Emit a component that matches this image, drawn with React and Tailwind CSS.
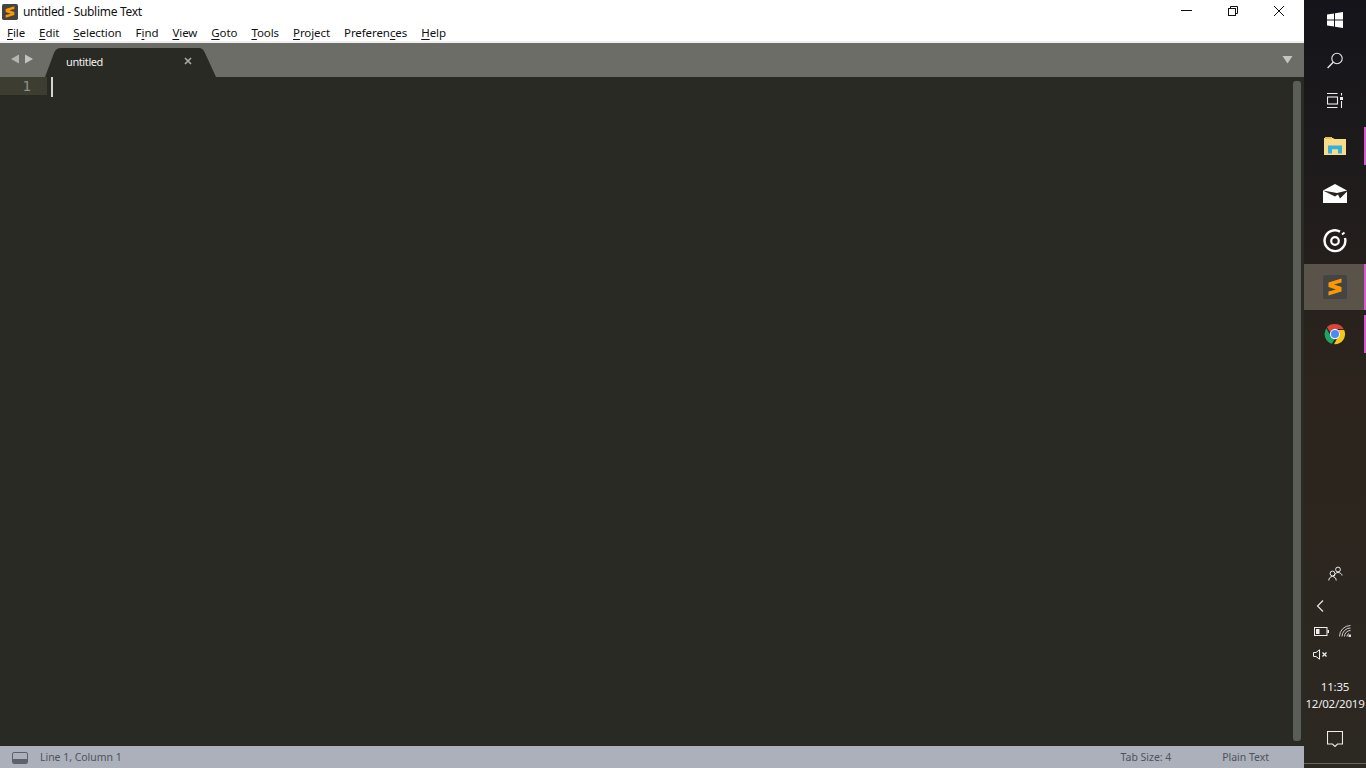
import React from 'react'

const uiFont = "font-['Noto_Sans','Open_Sans',sans-serif]"

const menus = [
  { label: 'File', idx: 0 },
  { label: 'Edit', idx: 0 },
  { label: 'Selection', idx: 0 },
  { label: 'Find', idx: 1 },
  { label: 'View', idx: 0 },
  { label: 'Goto', idx: 0 },
  { label: 'Tools', idx: 0 },
  { label: 'Project', idx: 0 },
  { label: 'Preferences', idx: 8 },
  { label: 'Help', idx: 0 },
]

export default function App() {
  return (
    <div className={`flex h-screen w-[1366px] overflow-hidden ${uiFont}`}>
      <div className="flex w-[1304px] flex-col">
        <TitleBar />
        <MenuBar />
        <TabBar />
        <Editor />
        <StatusBar />
      </div>
      <Taskbar />
    </div>
  )
}

function SublimeLogo({ size = 16 }) {
  return (
    <svg width={size} height={size} viewBox="0 0 24 24">
      <rect x="0" y="0" width="24" height="24" rx="2.5" fill="#444444" />
      <path d="M18.5 3.5L5.5 7.5V12L13 14.5L5.5 16.5V20.5L18.5 16.5V12L11 9.5L18.5 7.5Z" fill="#ff9800" />
    </svg>
  )
}

function TitleBar() {
  return (
    <div className="flex h-[23px] shrink-0 items-center bg-white">
      <div className="ml-[2px]"><SublimeLogo /></div>
      <span className="ml-[5px] text-[12px] leading-none tracking-[-0.3px] text-[#111]">untitled - Sublime Text</span>
      <div className="ml-auto flex pb-[2px]">
        <div className="flex w-[46px] justify-center">
          <svg width="12" height="12" viewBox="0 0 12 12"><path d="M0 5.5h11" stroke="#111" /></svg>
        </div>
        <div className="flex w-[46px] justify-center">
          <svg width="12" height="12" viewBox="0 0 12 12" fill="none" stroke="#111">
            <rect x="1.5" y="3.5" width="7" height="7" />
            <path d="M3.5 3.5v-2h7v7h-2" />
          </svg>
        </div>
        <div className="flex w-[46px] justify-center">
          <svg width="12" height="12" viewBox="0 0 12 12" stroke="#111" strokeWidth="1"><path d="M1 1l10 10M11 1L1 11" /></svg>
        </div>
        <div className="w-[2px]" />
      </div>
    </div>
  )
}

function MenuBar() {
  return (
    <div className="flex h-[20px] shrink-0 items-start gap-[14px] border-b-2 border-[#f0f0f0] bg-white pl-[7px] pt-[1px]">
      {menus.map((m) => (
        <span key={m.label} className="text-[11.5px] leading-[18px] tracking-[-0.08px] text-[#111]">
          {m.label.slice(0, m.idx)}
          <span className="underline underline-offset-2">{m.label[m.idx]}</span>
          {m.label.slice(m.idx + 1)}
        </span>
      ))}
    </div>
  )
}

function TabBar() {
  return (
    <div className="flex h-[34px] shrink-0 items-end bg-[#6c6d67]">
      <div className="flex h-[34px] w-[45px] items-center justify-center gap-[4px] pb-[3px] pr-[2px]">
        <svg width="10" height="10" viewBox="0 0 10 10"><path d="M9 0.5v9L1 5z" fill="#b4b5b1" /></svg>
        <svg width="10" height="10" viewBox="0 0 10 10"><path d="M1 0.5v9L9 5z" fill="#c4c5c1" /></svg>
      </div>
      <div className="relative flex h-[29px] w-[172px] items-center pb-[3px]">
        <svg className="absolute inset-0" width="172" height="29" viewBox="0 0 172 29">
          <path d="M0 29L9 5Q11 0 16 0H154Q158 0 160 5L171 29Z" fill="#292a24" />
        </svg>
        <span className="relative ml-[21px] text-[11px] leading-none tracking-[-0.4px] text-[#f1f1ec]">untitled</span>
        <svg className="relative ml-[81px]" width="8" height="8" viewBox="0 0 8 8">
          <path d="M1 1l6 6M7 1L1 7" stroke="#a9a9a5" strokeWidth="1.7" />
        </svg>
      </div>
      <div className="ml-auto flex h-[34px] items-center pb-[2px] pr-[11px]">
        <svg width="11" height="9" viewBox="0 0 11 9"><path d="M0.5 1h10L5.5 8.5z" fill="#c4c5c1" /></svg>
      </div>
    </div>
  )
}

function Editor() {
  return (
    <div className="flex min-h-0 flex-1 bg-[#292a24]">
      <div className="flex h-[18px] w-[47px] items-center justify-end bg-[#3e3d32] pr-[16px] font-['DejaVu_Sans_Mono',monospace] text-[14px] text-[#8f908a]">
        1
      </div>
      <div className="ml-[4px] h-[20px] w-[2px] bg-[#d4d4cc]" />
      <div className="ml-auto pb-[5px] pr-[3px] pt-[4px]">
        <div className="h-full w-[8px] rounded-[3px] bg-[#5b5d57]" />
      </div>
    </div>
  )
}

function StatusBar() {
  return (
    <div className="flex h-[22px] shrink-0 items-center bg-[#abb0bb] pt-[1px] text-[10.5px] tracking-[-0.03px] text-[#4f535c]">
      <div className="ml-[12px] flex h-[12px] w-[16px] flex-col overflow-hidden rounded-[2px] border border-[#5d6168]">
        <div className="flex-1" />
        <div className="h-[4px] bg-[#5d6168]" />
      </div>
      <span className="ml-[12px]">Line 1, Column 1</span>
      <span className="ml-auto">Tab Size: 4</span>
      <span className="ml-[51px] mr-[35px]">Plain Text</span>
    </div>
  )
}

function TaskItem({ h, active, pin, pinClass, children }) {
  return (
    <div className={`relative flex shrink-0 items-center justify-center ${h} ${active ? 'bg-[#5a5349]' : ''}`}>
      {children}
      {pin && <div className={`absolute right-0 w-[2px] bg-[#d75cd2] ${pinClass}`} />}
    </div>
  )
}

function Taskbar() {
  return (
    <div className="flex w-[62px] flex-col bg-gradient-to-b from-[#14141a] via-[#2c241d] to-[#2c2822] text-white">
      <TaskItem h="h-[40px]">
        <svg width="16" height="16" viewBox="0 0 16 16" fill="#fff">
          <path d="M0 2.5L7 1.4V7.4H0ZM8 1.2L16 0V7.4H8ZM0 8.4H7V14.6L0 13.5ZM8 8.4H16V16L8 14.8Z" />
        </svg>
      </TaskItem>
      <TaskItem h="h-[40px]">
        <svg width="16" height="17" viewBox="0 0 16 17" fill="none" stroke="#e8e8e8" strokeWidth="1.1">
          <circle cx="10" cy="6.5" r="5.2" />
          <path d="M6.2 10.2L0.6 16" strokeWidth="1.4" />
        </svg>
      </TaskItem>
      <TaskItem h="h-[43px] pb-[3px]">
        <svg width="16" height="15" viewBox="0 0 16 15" fill="none" stroke="#eee" strokeWidth="1.1">
          <path d="M0 .5h10.5M0 14.5h10.5" />
          <rect x=".5" y="4" width="10" height="7" />
          <path d="M14.5 0v2.5M14.5 8v7" />
          <rect x="13" y="4" width="3" height="3" fill="#eee" stroke="none" />
        </svg>
      </TaskItem>
      <TaskItem h="h-[47px] pb-[2px]" pin pinClass="top-[4px] h-[38px]">
        <svg width="22" height="18" viewBox="0 0 22 18">
          <path d="M0 1h9l1.5 1H22v16H0Z" fill="#f9dc87" />
          <path d="M1 0h7v2H1Z" fill="#e8bf5a" />
          <path d="M4 16.5v-8h14v8h-4v-4H8v4Z" fill="#35aee2" />
          <path d="M8 12.5h6v4H8Z" fill="#f9dc87" />
        </svg>
      </TaskItem>
      <TaskItem h="h-[47px]">
        <svg width="24" height="19" viewBox="0 0 24 19">
          <path d="M0 6.5L12 0L24 6.5V19H0Z" fill="#fff" />
          <path d="M0 6.5L14 9L24 6.5V7.5L17 14.5L15 10.5L12 12.5Z" fill="#2a241e" />
        </svg>
      </TaskItem>
      <TaskItem h="h-[47px]">
        <svg width="24" height="24" viewBox="0 0 24 24" fill="none" stroke="#fff">
          <path d="M17 2.6A10.4 10.4 0 1 0 22 9" strokeWidth="2.4" />
          <path d="M19 5.5l2.5-2" strokeWidth="2" />
          <circle cx="12" cy="12" r="3.8" strokeWidth="2.2" />
        </svg>
      </TaskItem>
      <TaskItem h="h-[46px]" active pin pinClass="inset-y-0">
        <SublimeLogo size={24} />
      </TaskItem>
      <div className="h-[1px]" />
      <TaskItem h="h-[47px] pb-[1px]" pin pinClass="top-[4px] h-[38px]">
        <svg width="22" height="22" viewBox="0 0 24 24">
          <path d="M12 1a11 11 0 0 1 9.5 5.5H12a5.5 5.5 0 0 0-5.2 3.6L3.2 4.6A11 11 0 0 1 12 1Z" fill="#dc4437" />
          <path d="M2.6 5.8l5 8.6a5.5 5.5 0 0 0 4.2 3.1L8.6 22.6A11 11 0 0 1 2.6 5.8Z" fill="#1fa463" />
          <path d="M22 7.5a11 11 0 0 1-11 15.5l5-8.7a5.5 5.5 0 0 0-.3-6.8Z" fill="#f5c518" />
          <circle cx="12" cy="12" r="5.6" fill="#f1f1f1" />
          <circle cx="12" cy="12" r="4.4" fill="#4a8af4" />
        </svg>
      </TaskItem>

      <div className="mt-auto flex flex-col">
        <div className="flex h-[36px] items-center justify-center pb-[6px]">
          <svg width="15" height="15" viewBox="0 0 15 15" fill="none" stroke="#eee" strokeWidth="1">
            <circle cx="10" cy="3.5" r="2.4" />
            <path d="M6.5 10c0-2 1.5-3.5 3.5-3.5S14 8 14 9.5" />
            <circle cx="4.5" cy="7.5" r="2.4" fill="#2c2620" />
            <path d="M.8 14.5c0-2.2 1.5-4 3.7-4s3.7 1.8 3.7 4" />
          </svg>
        </div>
        <div className="flex h-[25px] items-center pb-[1px] pl-[11px]">
          <svg width="10" height="14" viewBox="0 0 10 14" fill="none" stroke="#eee" strokeWidth="1.1"><path d="M8 1.5L2.5 7L8 12.5" /></svg>
        </div>
        <div className="flex h-[24px] items-center gap-[10px] pl-[10px]">
          <svg width="15" height="9" viewBox="0 0 15 9">
            <rect x=".5" y=".5" width="12.5" height="8" fill="none" stroke="#eee" />
            <rect x="2" y="2" width="3.5" height="5" fill="#eee" />
            <rect x="13.5" y="3" width="1.5" height="3" fill="#eee" />
          </svg>
          <svg width="13" height="12" viewBox="0 0 13 12" fill="none" stroke="#ddd" strokeWidth=".9">
            <path d="M.5 11.5A11 11 0 0 1 11.5 .5M3 11.5A8.5 8.5 0 0 1 11.5 3M5.5 11.5A6 6 0 0 1 11.5 5.5M8 11.5A3.5 3.5 0 0 1 10 8.5" />
            <rect x="9.5" y="9.5" width="2.5" height="2.5" fill="#ddd" stroke="none" />
          </svg>
        </div>
        <div className="flex h-[22px] items-center pl-[9px]">
          <svg width="15" height="11" viewBox="0 0 15 11" fill="none" stroke="#eee" strokeWidth="1">
            <path d="M.5 3.5H3L6.5 .8V10.2L3 7.5H.5Z" />
            <path d="M9.5 3.5l4 4M13.5 3.5l-4 4" strokeWidth="1.3" />
          </svg>
        </div>
        <div className="mt-[13px] flex flex-col items-center text-[11.5px] leading-[17px] tracking-[-0.2px] text-[#eee]">
          <span>11:35</span>
          <span>12/02/2019</span>
        </div>
        <div className="mt-[16px] flex h-[35px] items-start justify-center pt-[3px]">
          <svg width="16" height="16" viewBox="0 0 16 16" fill="none" stroke="#eee" strokeWidth="1.1">
            <path d="M.5 .5h15v12.5H10.5L8 15.5L5.5 13H.5Z" />
          </svg>
        </div>
        <div className="h-[1px] bg-[#6b675f]" />
        <div className="h-[4px]" />
      </div>
    </div>
  )
}
